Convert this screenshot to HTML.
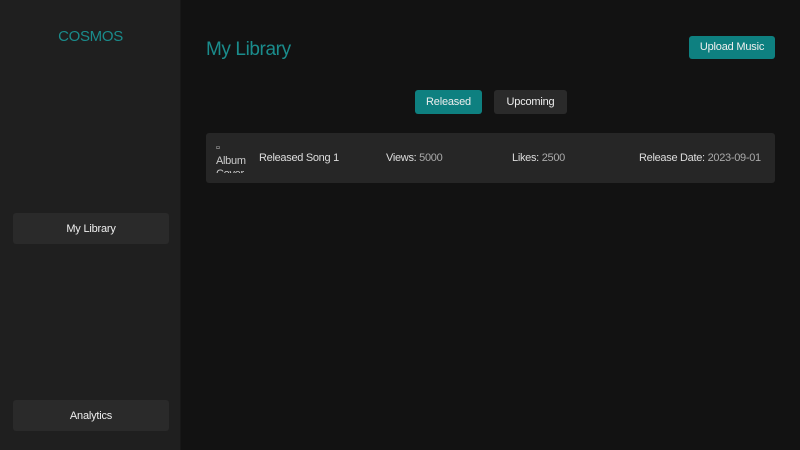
<!DOCTYPE html>
<html><head><style>
*{box-sizing:border-box;margin:0;padding:0}
body{width:800px;height:450px;background:#121212;font-family:"Liberation Sans",sans-serif;color:#ddd;position:relative;overflow:hidden}
.side{position:absolute;left:0;top:0;width:181px;height:450px;background:#1f1f1f;border-right:1px solid #181818}
.logo{position:absolute;left:0;width:181px;top:28px;text-align:center;color:#1a8c8c;font-size:15px;letter-spacing:-0.3px}
.nav{position:absolute;left:13px;width:156px;height:31px;background:#2a2a2a;border-radius:3px;color:#eee;font-size:11px;text-align:center;line-height:32px;letter-spacing:-0.2px}
h1{position:absolute;left:206px;top:39px;font-size:19px;font-weight:normal;color:#1a8c8c;letter-spacing:-0.4px}
.btn{position:absolute;border-radius:3px;font-size:11px;text-align:center;color:#eee;letter-spacing:-0.2px}
.row{position:absolute;left:206px;top:133px;width:569px;height:50px;background:#262626;border-radius:3px;font-size:11px;color:#ddd;letter-spacing:-0.3px}
.row span{position:absolute;top:19px}
.g{color:#aaa}
</style></head><body>
<div class="side">
<div class="logo">COSMOS</div>
<div class="nav" style="top:213px">My Library</div>
<div class="nav" style="top:400px">Analytics</div>
</div>
<h1>My Library</h1>
<div class="btn" style="left:689px;top:36px;width:86px;height:23px;line-height:23px;background:#0e8080">Upload Music</div>
<div class="btn" style="left:415px;top:90px;width:67px;height:24px;line-height:25px;background:#0e8080">Released</div>
<div class="btn" style="left:494px;top:90px;width:73px;height:24px;line-height:25px;background:#2a2a2a">Upcoming</div>
<div class="row">
<span style="left:10px;top:9px;font-size:11px;line-height:13px;width:34px;height:31px;overflow:hidden;color:#ccc">▫<br>Album<br>Cover</span>
<span style="left:53px">Released Song 1</span>
<span style="left:180px">Views: <span class="g" style="position:static">5000</span></span>
<span style="left:306px">Likes: <span class="g" style="position:static">2500</span></span>
<span style="left:433px">Release Date: <span class="g" style="position:static">2023-09-01</span></span>
</div>
</body></html>
